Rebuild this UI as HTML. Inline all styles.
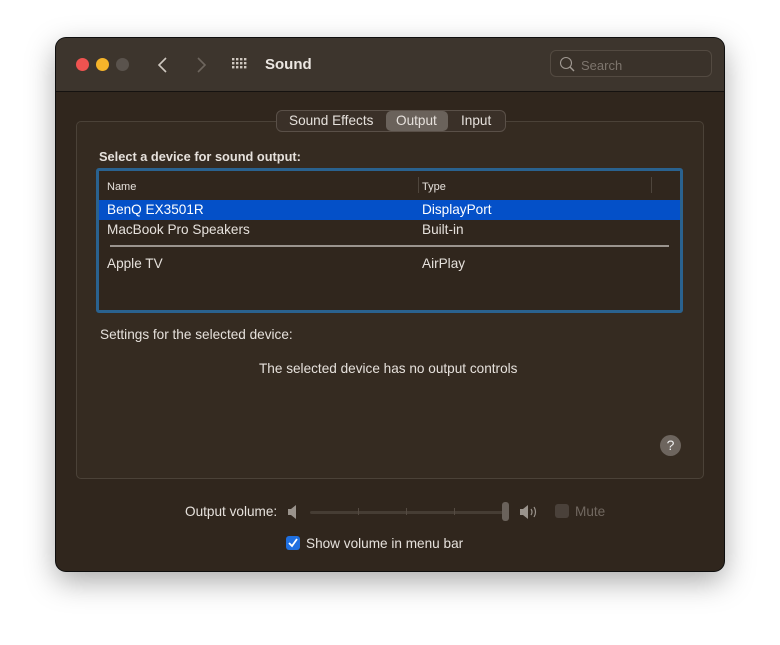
<!DOCTYPE html>
<html><head><meta charset="utf-8"><style>
*{margin:0;padding:0;box-sizing:border-box}
body{width:780px;height:645px;background:#fff;font-family:"Liberation Sans",sans-serif;position:relative;overflow:hidden;color:#e6e1dc;font-size:13.6px}
.win{position:absolute;left:56px;top:38px;width:668px;height:533px;border-radius:10px;background:#30261d;box-shadow:0 10px 30px rgba(0,0,0,.35),0 0 0 1px #111;overflow:hidden}
.tb{position:absolute;left:0;top:0;width:668px;height:54px;background:#3d352d;border-bottom:1px solid #151210}
.dot{position:absolute;top:20px;width:13px;height:13px;border-radius:50%}
.a{position:absolute;white-space:nowrap}
.box{position:absolute;left:20px;top:83px;width:628px;height:358px;border:1px solid #4b4238;border-radius:5px;background:#352b21}
.seg{position:absolute;left:220px;top:72px;width:230px;height:22px;border:1px solid #5a5048;border-radius:6px;background:#3a3028}
.list{position:absolute;left:40px;top:130px;width:587px;height:145px;border:3px solid #2a628f;border-radius:3px;background:#30261d}
</style></head><body>
<div class="win">
 <div class="tb">
  <div class="dot" style="left:20px;background:#ef5350"></div>
  <div class="dot" style="left:40px;background:#f5b42a"></div>
  <div class="dot" style="left:60px;background:#5a534d"></div>
  <svg class="a" style="left:100px;top:17px" width="14" height="20"><path d="M10 3 L3 10 L10 17" stroke="#cfc8c0" stroke-width="1.6" fill="none"/></svg>
  <svg class="a" style="left:138px;top:17px" width="14" height="20"><path d="M4 3 L11 10 L4 17" stroke="#6e665e" stroke-width="1.6" fill="none"/></svg>
  <svg class="a" style="left:176px;top:19px" width="18" height="16" fill="#cfc8c0"><g id="r"><rect x="0" y="1" width="2.4" height="2.4"/><rect x="4" y="1" width="2.4" height="2.4"/><rect x="8" y="1" width="2.4" height="2.4"/><rect x="12" y="1" width="2.4" height="2.4"/></g><use href="#r" y="4"/><use href="#r" y="8"/></svg>
  <div class="a" style="left:209px;top:18px;font-size:15px;font-weight:bold;color:#ece7e2">Sound</div>
  <div class="a" style="left:494px;top:12px;width:162px;height:27px;border:1px solid #534a41;border-radius:6px;background:#3a322a"></div>
  <svg class="a" style="left:503px;top:18px" width="18" height="18"><circle cx="7" cy="7" r="5.5" stroke="#a09992" stroke-width="1.1" fill="none"/><path d="M11 11 L15 15" stroke="#a09992" stroke-width="1.4"/></svg>
  <div class="a" style="left:525px;top:20px;color:#7d756d;font-size:13px">Search</div>
 </div>
 <div class="box"></div>
 <div class="seg"></div>
 <div class="a" style="left:330px;top:73px;width:62px;height:20px;background:#6a625b;border-radius:5px"></div>
 <div class="a" style="left:233px;top:75px">Sound Effects</div>
 <div class="a" style="left:340px;top:75px">Output</div>
 <div class="a" style="left:405px;top:75px">Input</div>
 <div class="a" style="left:43px;top:111px;font-weight:bold;font-size:12.8px">Select a device for sound output:</div>
 <div class="list">
  <div class="a" style="left:8px;top:10px;font-size:11px">Name</div>
  <div class="a" style="left:319px;top:6px;width:1px;height:16px;background:#4e453c"></div>
  <div class="a" style="left:552px;top:6px;width:1px;height:16px;background:#4e453c"></div>
  <div class="a" style="left:323px;top:10px;font-size:11px">Type</div>
  <div class="a" style="left:0;top:29px;width:581px;height:20px;background:#0450c8"></div>
  <div class="a" style="left:8px;top:31px;color:#fff">BenQ EX3501R</div>
  <div class="a" style="left:323px;top:31px;color:#fff">DisplayPort</div>
  <div class="a" style="left:8px;top:51px">MacBook Pro Speakers</div>
  <div class="a" style="left:323px;top:51px">Built-in</div>
  <div class="a" style="left:11px;top:74px;width:559px;height:2px;background:#9a948e"></div>
  <div class="a" style="left:8px;top:85px">Apple TV</div>
  <div class="a" style="left:323px;top:85px">AirPlay</div>
 </div>
 <div class="a" style="left:44px;top:289px">Settings for the selected device:</div>
 <div class="a" style="left:203px;top:323px">The selected device has no output controls</div>
 <div class="a" style="left:604px;top:397px;width:21px;height:21px;border-radius:50%;background:#6d655e;color:#eee;text-align:center;line-height:21px;font-size:14px">?</div>
 <div class="a" style="left:129px;top:466px">Output volume:</div>
 <svg class="a" style="left:230px;top:466px" width="14" height="16"><path d="M2 5h3l5-4v14l-5-4H2z" fill="#9a938c"/></svg>
 <div class="a" style="left:254px;top:473px;width:196px;height:3px;background:#463d34;border-radius:2px"></div>
 <div class="a" style="left:302px;top:470px;width:1px;height:7px;background:#554b42"></div>
 <div class="a" style="left:350px;top:470px;width:1px;height:7px;background:#554b42"></div>
 <div class="a" style="left:398px;top:470px;width:1px;height:7px;background:#554b42"></div>
 <div class="a" style="left:446px;top:464px;width:7px;height:19px;border-radius:3px;background:#6a625b"></div>
 <svg class="a" style="left:463px;top:465px" width="24" height="18"><path d="M1 6h3l5-4v14l-5-4H1z" fill="#9a938c"/><path d="M12 6q2 3 0 6M15 4q3 5 0 10" stroke="#9a938c" stroke-width="1.2" fill="none"/></svg>
 <div class="a" style="left:499px;top:466px;width:14px;height:14px;border-radius:3px;background:#4a413a"></div>
 <div class="a" style="left:519px;top:466px;color:#716860">Mute</div>
 <div class="a" style="left:230px;top:498px;width:14px;height:14px;border-radius:3px;background:#1f6fe0"></div>
 <svg class="a" style="left:230px;top:498px" width="14" height="14"><path d="M3 7l3 3l5-7" stroke="#fff" stroke-width="1.8" fill="none"/></svg>
 <div class="a" style="left:250px;top:498px">Show volume in menu bar</div>
</div>
</body></html>
